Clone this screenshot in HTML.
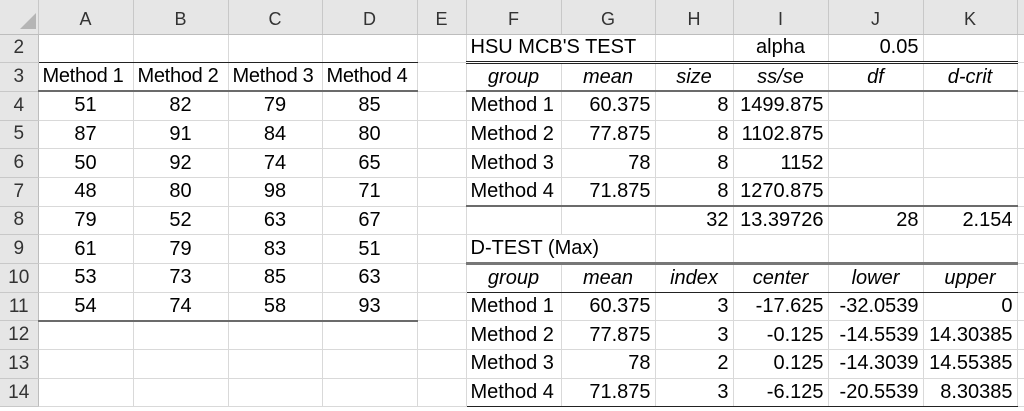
<!DOCTYPE html>
<html><head><style>
body{margin:0;width:1024px;height:411px;overflow:hidden;background:#fff;font-family:"Liberation Sans",Arial,sans-serif;}
table{border-collapse:collapse;table-layout:fixed;width:1031px;}
td{border-right:1px solid #d9d9d9;border-bottom:1px solid #d9d9d9;height:28.7px;padding:0 4px;font-size:20px;color:#000;white-space:nowrap;overflow:visible;box-sizing:border-box;}
tr.h td{height:34px;background:#e6e6e6;color:#333;text-align:center;font-size:18px;border-right:1px solid #c8c8c8;border-bottom:1px solid #bdbdbd;padding-top:6px;}
td.rh{background:#e6e6e6;color:#333;text-align:center;font-size:19px;border-right:1px solid #bdbdbd;border-bottom:1px solid #c8c8c8;padding:0;}
.c{text-align:center}.r{text-align:right}.l{text-align:left}.i{font-style:italic;text-align:center}
.bb{border-bottom:1.5px solid #222 !important}
.bg{border-bottom:2px solid #6b6b6b !important}
.bd{border-bottom:3px double #222 !important}
.bt{border-bottom:3px solid #777 !important}
td.m{padding:0 0 0 4px;letter-spacing:-0.3px}
</style></head><body>
<table>
<colgroup><col style="width:38px"><col style="width:95px"><col style="width:95px"><col style="width:94px"><col style="width:95px"><col style="width:49px"><col style="width:95px"><col style="width:94px"><col style="width:78px"><col style="width:95px"><col style="width:95px"><col style="width:94px"><col style="width:14px"></colgroup>
<tr class="h"><td><svg width="30" height="26" style="display:block;margin:-4px 0 0 4px"><polygon points="28,8 28,24 12,24" fill="#b5b5b5"/></svg></td><td>A</td><td>B</td><td>C</td><td>D</td><td>E</td><td>F</td><td>G</td><td>H</td><td>I</td><td>J</td><td>K</td><td></td></tr>
<tr><td class="rh">2</td><td class="bb"></td><td class="bb"></td><td class="bb"></td><td class="bb"></td><td></td><td class="l bd" style="border-right:none">HSU MCB'S TEST</td><td class="bd"></td><td class="bd"></td><td class="c bd">alpha</td><td class="r bd">0.05</td><td class="bd"></td><td></td></tr>
<tr><td class="rh">3</td><td class="l m bg">Method 1</td><td class="l m bg">Method 2</td><td class="l m bg">Method 3</td><td class="l m bg">Method 4</td><td></td><td class="i bg">group</td><td class="i bg">mean</td><td class="i bg">size</td><td class="i bg">ss/se</td><td class="i bg">df</td><td class="i bg">d-crit</td><td></td></tr>
<tr><td class="rh">4</td><td class="c">51</td><td class="c">82</td><td class="c">79</td><td class="c">85</td><td></td><td class="l">Method 1</td><td class="r">60.375</td><td class="r">8</td><td class="r">1499.875</td><td></td><td></td><td></td></tr>
<tr><td class="rh">5</td><td class="c">87</td><td class="c">91</td><td class="c">84</td><td class="c">80</td><td></td><td class="l">Method 2</td><td class="r">77.875</td><td class="r">8</td><td class="r">1102.875</td><td></td><td></td><td></td></tr>
<tr><td class="rh">6</td><td class="c">50</td><td class="c">92</td><td class="c">74</td><td class="c">65</td><td></td><td class="l">Method 3</td><td class="r">78</td><td class="r">8</td><td class="r">1152</td><td></td><td></td><td></td></tr>
<tr><td class="rh">7</td><td class="c">48</td><td class="c">80</td><td class="c">98</td><td class="c">71</td><td></td><td class="l bg">Method 4</td><td class="r bg">71.875</td><td class="r bg">8</td><td class="r bg">1270.875</td><td class="bg"></td><td class="bg"></td><td></td></tr>
<tr><td class="rh">8</td><td class="c">79</td><td class="c">52</td><td class="c">63</td><td class="c">67</td><td></td><td></td><td></td><td class="r">32</td><td class="r">13.39726</td><td class="r">28</td><td class="r">2.154</td><td></td></tr>
<tr><td class="rh">9</td><td class="c">61</td><td class="c">79</td><td class="c">83</td><td class="c">51</td><td></td><td class="l bt" style="border-right:none">D-TEST (Max)</td><td class="bt"></td><td class="bt"></td><td class="bt"></td><td class="bt"></td><td class="bt"></td><td></td></tr>
<tr><td class="rh">10</td><td class="c">53</td><td class="c">73</td><td class="c">85</td><td class="c">63</td><td></td><td class="i bb">group</td><td class="i bb">mean</td><td class="i bb">index</td><td class="i bb">center</td><td class="i bb">lower</td><td class="i bb">upper</td><td></td></tr>
<tr><td class="rh">11</td><td class="c bg">54</td><td class="c bg">74</td><td class="c bg">58</td><td class="c bg">93</td><td></td><td class="l">Method 1</td><td class="r">60.375</td><td class="r">3</td><td class="r">-17.625</td><td class="r">-32.0539</td><td class="r">0</td><td></td></tr>
<tr><td class="rh">12</td><td></td><td></td><td></td><td></td><td></td><td class="l">Method 2</td><td class="r">77.875</td><td class="r">3</td><td class="r">-0.125</td><td class="r">-14.5539</td><td class="r">14.30385</td><td></td></tr>
<tr><td class="rh">13</td><td></td><td></td><td></td><td></td><td></td><td class="l">Method 3</td><td class="r">78</td><td class="r">2</td><td class="r">0.125</td><td class="r">-14.3039</td><td class="r">14.55385</td><td></td></tr>
<tr><td class="rh">14</td><td></td><td></td><td></td><td></td><td></td><td class="l bb">Method 4</td><td class="r bb">71.875</td><td class="r bb">3</td><td class="r bb">-6.125</td><td class="r bb">-20.5539</td><td class="r bb">8.30385</td><td></td></tr>
</table>
</body></html>
